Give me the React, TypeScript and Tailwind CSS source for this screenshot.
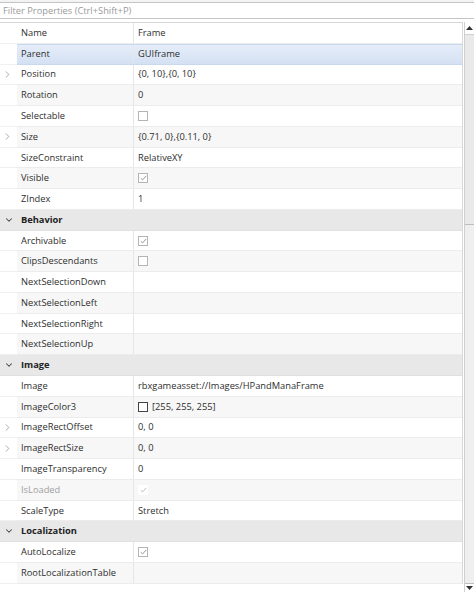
import { ChevronDown, ChevronRight } from "lucide-react";

type Prop = {
  name: string;
  value?: string;
  kind?: "text" | "check" | "color";
  checked?: boolean;
  expandable?: boolean;
  disabled?: boolean;
  selected?: boolean;
};

type Section = { title?: string; props: Prop[] };

const sections: Section[] = [
  {
    props: [
      { name: "Name", value: "Frame" },
      { name: "Parent", value: "GUIframe", selected: true },
      { name: "Position", value: "{0, 10},{0, 10}", expandable: true },
      { name: "Rotation", value: "0" },
      { name: "Selectable", kind: "check" },
      { name: "Size", value: "{0.71, 0},{0.11, 0}", expandable: true },
      { name: "SizeConstraint", value: "RelativeXY" },
      { name: "Visible", kind: "check", checked: true },
      { name: "ZIndex", value: "1" },
    ],
  },
  {
    title: "Behavior",
    props: [
      { name: "Archivable", kind: "check", checked: true },
      { name: "ClipsDescendants", kind: "check" },
      { name: "NextSelectionDown" },
      { name: "NextSelectionLeft" },
      { name: "NextSelectionRight" },
      { name: "NextSelectionUp" },
    ],
  },
  {
    title: "Image",
    props: [
      { name: "Image", value: "rbxgameasset://Images/HPandManaFrame" },
      { name: "ImageColor3", kind: "color", value: "[255, 255, 255]" },
      { name: "ImageRectOffset", value: "0, 0", expandable: true },
      { name: "ImageRectSize", value: "0, 0", expandable: true },
      { name: "ImageTransparency", value: "0" },
      { name: "IsLoaded", kind: "check", checked: true, disabled: true },
      { name: "ScaleType", value: "Stretch" },
    ],
  },
  {
    title: "Localization",
    props: [
      { name: "AutoLocalize", kind: "check", checked: true },
      { name: "RootLocalizationTable" },
    ],
  },
];

function CheckBox({ checked, disabled }: { checked?: boolean; disabled?: boolean }) {
  return (
    <div
      className={`w-[10px] h-[10px] border flex items-center justify-center bg-white ${
        disabled ? "border-transparent" : "border-[#b4b4b4]"
      }`}
    >
      {checked && (
        <svg width="7" height="6" viewBox="0 0 7 6" fill="none">
          <path d="M0.8 3.2 L2.6 4.9 L6.2 0.9" stroke={disabled ? "#b8b8b8" : "#8a8a8a"} strokeWidth="0.9" />
        </svg>
      )}
    </div>
  );
}

function PropRow({ prop, index }: { prop: Prop; index: number }) {
  const stripe = index % 2 === 1 ? "bg-[#f7f7f7]" : "bg-white";
  return (
    <div className="flex h-[20.77px] bg-white">
      <div className="w-[17px] flex items-center justify-center border-b border-[#f0f0f0]">
        {prop.expandable && (
          <ChevronRight className="w-[11px] h-[11px] text-[#8f8f8f] -ml-[3px]" strokeWidth={1.6} />
        )}
      </div>
      <div
        className={`flex flex-1 ${
          prop.selected
            ? "bg-gradient-to-b from-[#e5edf9] to-[#d4e1f3] border-y border-[#c9d8ee]"
            : `${stripe} border-b border-[#ececec]`
        }`}
      >
        <div
          className={`w-[117px] flex items-center pl-[4px] border-r border-[#e6e6e6] ${
            prop.disabled ? "text-[#a0a0a0]" : "text-[#2e2e2e]"
          }`}
        >
          {prop.name}
        </div>
        <div className="flex-1 flex items-center pl-[4px] text-[#2e2e2e]">
          {prop.kind === "check" && <CheckBox checked={prop.checked} disabled={prop.disabled} />}
          {prop.kind === "color" && (
            <>
              <div className="w-[10px] h-[10px] border-[1.5px] border-[#444444] bg-white mr-[4px]" />
              {prop.value}
            </>
          )}
          {(prop.kind === undefined || prop.kind === "text") && prop.value}
        </div>
      </div>
    </div>
  );
}

function SectionHeader({ title }: { title: string }) {
  return (
    <div className="flex h-[20.77px] items-center bg-[#e8e8e8] border-b border-[#e0e0e0]">
      <div className="w-[17px] flex items-center justify-center">
        <ChevronDown className="w-[10px] h-[10px] text-[#444444]" strokeWidth={2.5} />
      </div>
      <span className="pl-[4px] font-bold text-[#222222]">{title}</span>
    </div>
  );
}

export default function App() {
  return (
    <div
      className="w-[474px] h-[594px] bg-white overflow-hidden text-[9.3px]"
      style={{ fontFamily: '"Open Sans", "Noto Sans", sans-serif' }}
    >
      <div className="pt-[2px] bg-[#f3f3f3]">
        <div className="h-[17px] bg-white border-y border-[#c4c4c4] flex items-center pl-[3px] text-[#9a9a9a]">
          Filter Properties (Ctrl+Shift+P)
        </div>
      </div>
      <div className="h-[3px]" />
      <div className="flex">
        <div className="w-[464px] h-[562px] border-t border-r border-[#d8d8d8] overflow-hidden">
          {sections.map((s, si) => (
            <div key={si}>
              {s.title && <SectionHeader title={s.title} />}
              {s.props.map((p, i) => (
                <PropRow key={p.name} prop={p} index={i} />
              ))}
            </div>
          ))}
        </div>
        <div className="w-[10px] h-[570px] flex flex-col bg-[#efefef] border-l border-[#cfcfcf] ml-[1px]">
          <div className="h-[13px] flex items-center justify-center bg-white border-b border-[#d0d0d0]">
            <svg width="7" height="4" viewBox="0 0 7 4">
              <path d="M0 4 L3.5 0 L7 4 Z" fill="#333333" />
            </svg>
          </div>
          <div className="h-[190px] bg-[#e9e9e9] border-b border-[#bdbdbd]" />
          <div className="flex-1" />
          <div className="h-[9px] flex items-center justify-center bg-white border-t border-[#bdbdbd]">
            <svg width="7" height="4" viewBox="0 0 7 4">
              <path d="M0 0 L7 0 L3.5 4 Z" fill="#333333" />
            </svg>
          </div>
        </div>
      </div>
    </div>
  );
}
